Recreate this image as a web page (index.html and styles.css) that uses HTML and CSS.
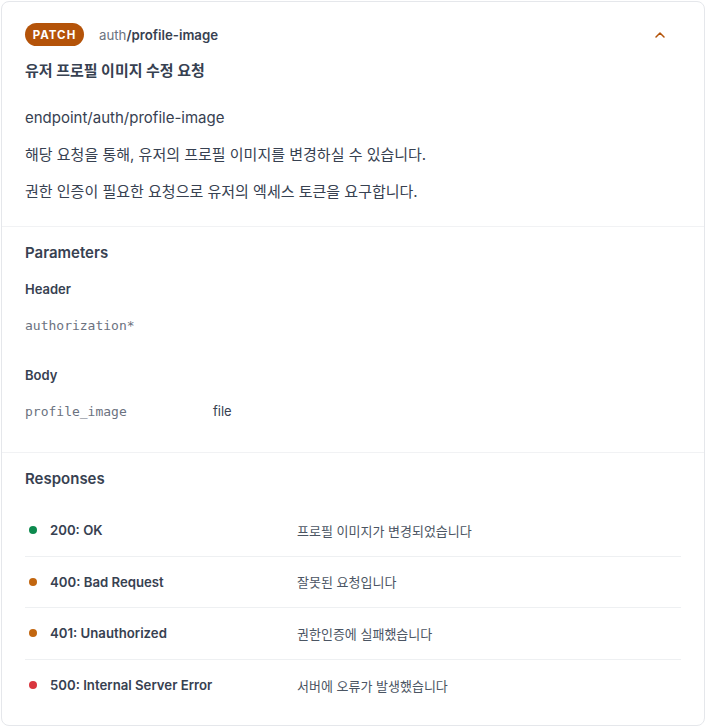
FILE: index.html
```html
<!DOCTYPE html>
<html lang="ko">
<head>
<meta charset="utf-8">
<link rel="stylesheet" href="styles.css">
</head>
<body>
<div class="card">
  <section class="intro">
    <div class="head">
      <span class="badge">PATCH</span>
      <span class="path"><span class="path-base">auth</span>/profile-image</span>
      <svg class="chev" width="12" height="8" viewBox="0 0 12 8"><path d="M2 6 L6 2 L10 6" fill="none" stroke="#b45309" stroke-width="1.5" stroke-linecap="round" stroke-linejoin="round"/></svg>
    </div>
    <h1 class="title">유저 프로필 이미지 수정 요청</h1>
    <p class="text endpoint">endpoint/auth/profile-image</p>
    <p class="text">해당 요청을 통해, 유저의 프로필 이미지를 변경하실 수 있습니다.</p>
    <p class="text">권한 인증이 필요한 요청으로 유저의 엑세스 토큰을 요구합니다.</p>
  </section>
  <section class="params">
    <h2 class="sec-title">Parameters</h2>
    <h3 class="sub-title">Header</h3>
    <div class="param"><code class="pname">authorization*</code></div>
    <h3 class="sub-title body-title">Body</h3>
    <div class="param"><code class="pname">profile_image</code><span class="ptype">file</span></div>
  </section>
  <section class="responses">
    <h2 class="sec-title">Responses</h2>
    <ul class="resp-list">
      <li class="resp"><span class="dot ok"></span><span class="code">200: OK</span><span class="desc">프로필 이미지가 변경되었습니다</span></li>
      <li class="resp"><span class="dot warn"></span><span class="code">400: Bad Request</span><span class="desc">잘못된 요청입니다</span></li>
      <li class="resp"><span class="dot warn"></span><span class="code">401: Unauthorized</span><span class="desc">권한인증에 실패했습니다</span></li>
      <li class="resp"><span class="dot err"></span><span class="code">500: Internal Server Error</span><span class="desc">서버에 오류가 발생했습니다</span></li>
    </ul>
  </section>
</div>
</body>
</html>
```
FILE: styles.css
```css
* { box-sizing: border-box; }
html, body { margin: 0; padding: 0; background: #ffffff; }
body {
  font-family: Inter, "Noto Sans CJK KR", sans-serif;
  color: #374151;
  padding: 1px;
}
.card {
  width: 704px;
  height: 725px;
  border: 1px solid #e5e7eb;
  border-radius: 8px;
  background: #fff;
  overflow: hidden;
}
.intro {
  padding: 21px 24px 23px 23px;
  border-bottom: 1px solid #f1f2f4;
}
.head {
  display: flex;
  align-items: center;
  height: 23px;
}
.badge {
  display: inline-flex;
  align-items: center;
  justify-content: center;
  height: 23px;
  width: 59px;
  border-radius: 12px;
  background: #b45309;
  color: #fff;
  font-size: 11.5px;
  font-weight: 700;
  letter-spacing: 1px;
}
.path {
  margin-left: 15px;
  font-size: 13.25px;
  font-weight: 600;
  color: #374151;
}
.path-base { font-weight: 400; color: #6b7280; }
.chev { margin-left: auto; margin-right: 14px; }
.title {
  margin: 14px 0 0;
  font-size: 15px;
  font-weight: 700;
  color: #374151;
  line-height: 22px;
}
.text {
  margin: 0;
  font-size: 15px;
  line-height: 22px;
  color: #374151;
}
.endpoint { margin-top: 25px; }
.text + .text { margin-top: 15px; }
.params {
  padding: 15px 24px 30px 23px;
  border-bottom: 1px solid #f1f2f4;
}
.sec-title {
  margin: 0;
  font-size: 15px;
  font-weight: 600;
  line-height: 22px;
  color: #374151;
}
.sub-title {
  margin: 14px 0 0;
  font-size: 13px;
  font-weight: 600;
  line-height: 22px;
  color: #374151;
}
.body-title { margin-top: 28px; }
.param {
  display: flex;
  align-items: center;
  margin-top: 14px;
  height: 22px;
}
.pname {
  font-family: "DejaVu Sans Mono", monospace;
  font-size: 13px;
  color: #6b7280;
  width: 188px;
}
.ptype { font-size: 13px; color: #374151; }
.responses {
  padding: 15px 24px 0 23px;
}
.resp-list {
  list-style: none;
  margin: 15px 0 0;
  padding: 0;
  width: 656px;
}
.resp {
  display: flex;
  align-items: center;
  height: 51.5px;
  border-bottom: 1px solid #eef0f2;
}
.resp:last-child { border-bottom: none; }
.dot {
  width: 8px;
  height: 8px;
  border-radius: 50%;
  margin-left: 4px;
  margin-right: 13px;
}
.ok { background: #0d8a4e; }
.warn { background: #c2660f; }
.err { background: #d9363e; }
.code {
  width: 247px;
  font-size: 13.2px;
  font-weight: 600;
  color: #374151;
}
.desc {
  font-size: 13px;
  color: #4b5563;
}
```
